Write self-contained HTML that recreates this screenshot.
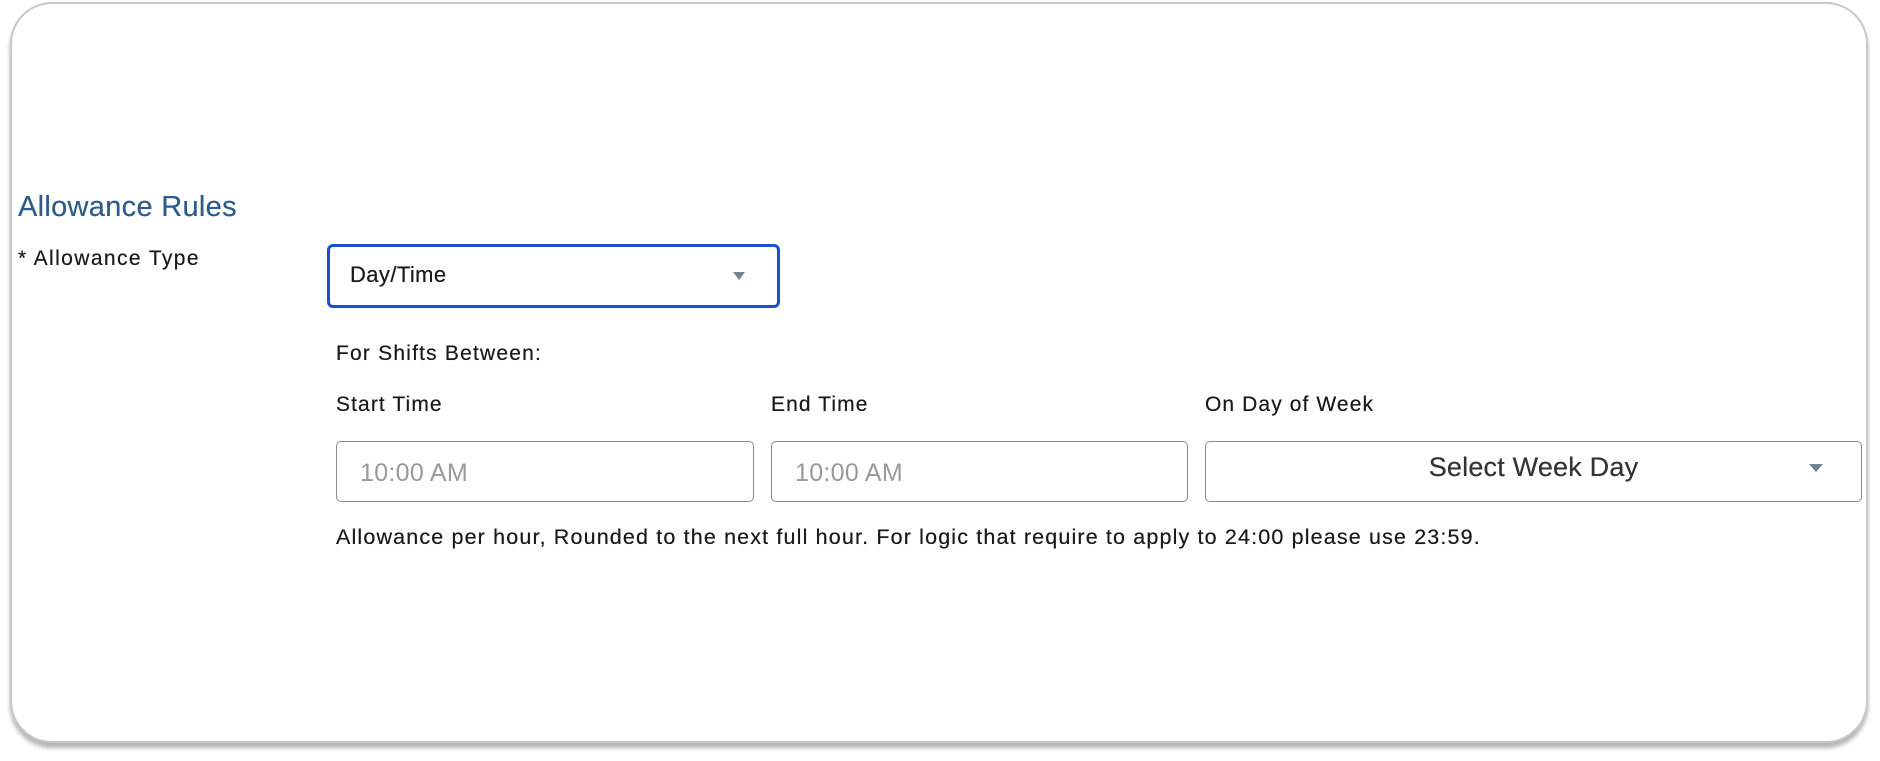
<!DOCTYPE html>
<html><head><style>
html,body{margin:0;padding:0;background:#fff;width:1880px;height:761px;overflow:hidden;font-family:"Liberation Sans",sans-serif;color:#1a1a1a;}
.card{position:absolute;left:10px;top:2px;width:1858px;height:741px;border:2px solid #c8c8c8;border-radius:42px;box-shadow:0 5px 4px #b5b5b5;background:#fff;box-sizing:border-box;}
.abs{position:absolute;white-space:nowrap;}
.lbl{font-size:21px;letter-spacing:1.1px;text-shadow:0 0 0.4px #1a1a1a;}
.box{position:absolute;box-sizing:border-box;border:1.5px solid #8a8a8a;border-radius:5px;background:#fff;}
.tri{position:absolute;width:0;height:0;border-left:7px solid transparent;border-right:7px solid transparent;border-top:8px solid #6f8590;}
</style></head><body>
<div class="card"></div>
<div class="abs" style="left:18px;top:191px;font-size:29px;color:#2d5c8a;letter-spacing:0.3px;text-shadow:0 0 0.4px #2d5c8a">Allowance Rules</div>
<div class="abs lbl" style="left:18px;top:247px;letter-spacing:1.4px">* Allowance Type</div>
<div class="box" style="left:327px;top:244px;width:453px;height:64px;border:3px solid #1a50d0;border-radius:6px"></div>
<div class="abs lbl" style="left:350px;top:262px;font-size:22px;letter-spacing:0.4px">Day/Time</div>
<div class="tri" style="left:733px;top:272px;border-left-width:6px;border-right-width:6px;border-top-width:8px"></div>
<div class="abs lbl" style="left:336px;top:342px;letter-spacing:1.2px">For Shifts Between:</div>
<div class="abs lbl" style="left:336px;top:393px;">Start Time</div>
<div class="abs lbl" style="left:771px;top:393px;">End Time</div>
<div class="abs lbl" style="left:1205px;top:393px;">On Day of Week</div>
<div class="box" style="left:336px;top:441px;width:418px;height:61px"></div>
<div class="abs" style="left:360px;top:459px;font-size:25px;color:#999;letter-spacing:0.3px">10:00 AM</div>
<div class="box" style="left:771px;top:441px;width:417px;height:61px"></div>
<div class="abs" style="left:795px;top:459px;font-size:25px;color:#999;letter-spacing:0.3px">10:00 AM</div>
<div class="box" style="left:1205px;top:441px;width:657px;height:61px"></div>
<div class="abs" style="left:1205px;top:452px;width:657px;text-align:center;font-size:27px;color:#333;letter-spacing:0.2px;text-shadow:0 0 0.4px #333">Select Week Day</div>
<div class="tri" style="left:1809px;top:464px"></div>
<div class="abs lbl" style="left:336px;top:525px;font-size:21.5px;letter-spacing:1.15px">Allowance per hour, Rounded to the next full hour. For logic that require to apply to 24:00 please use 23:59.</div>
</body></html>
